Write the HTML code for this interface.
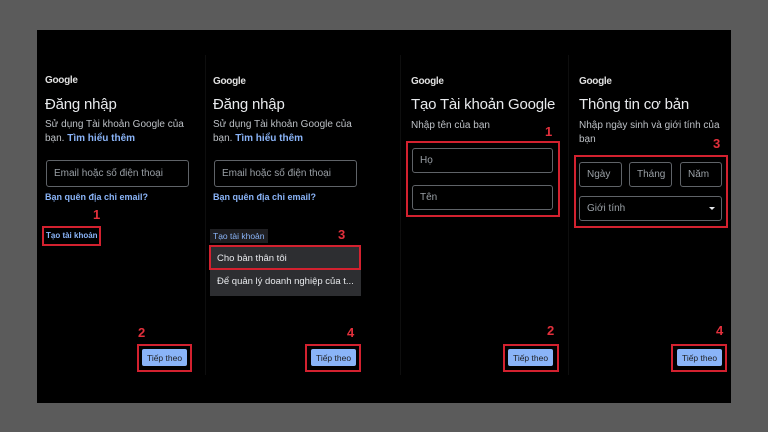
<!DOCTYPE html>
<html><head><meta charset="utf-8"><style>
*{margin:0;padding:0;box-sizing:border-box}
body{width:768px;height:432px;background:#5b5b5b;position:relative;overflow:hidden;font-family:"Liberation Sans",sans-serif;color:#e8eaed}
.blk{position:absolute;left:37px;top:30px;width:694px;height:373px;background:#000}
.a{position:absolute;white-space:nowrap}
.g{font-size:10px;font-weight:bold;color:#e0e0e0;letter-spacing:-.3px}
.t{font-size:15px;color:#e8eaed;letter-spacing:-.2px}
.s{font-size:10px;color:#bdc1c6;line-height:14px}
.lk{color:#8ab4f8;font-weight:bold}
.in{position:absolute;border:1px solid #5f6368;border-radius:3px;font-size:10px;color:#9aa0a6;padding-left:7px;display:flex;align-items:center}
.red{position:absolute;border:2px solid #d3212f}
.n{position:absolute;color:#e3303c;font-weight:bold;font-size:13px}
.btn{position:absolute;background:#8ab4f8;color:#202124;font-size:8.5px;border-radius:2px;display:flex;align-items:center;justify-content:center}
.dv{position:absolute;width:1px;background:#0e0e0e}
</style></head><body>
<div class="blk"></div>
<div class="dv" style="left:205px;top:55px;height:320px"></div>
<div class="dv" style="left:400px;top:55px;height:320px"></div>
<div class="dv" style="left:568px;top:55px;height:320px"></div>

<!-- panel 1 -->
<div class="a g" style="left:45px;top:75px">Google</div>
<div class="a t" style="left:45px;top:96px">Đăng nhập</div>
<div class="a s" style="left:45px;top:118px">Sử dụng Tài khoản Google của<br>bạn. <span class="lk">Tìm hiểu thêm</span></div>
<div class="in" style="left:46px;top:160px;width:143px;height:27px">Email hoặc số điện thoại</div>
<div class="a lk" style="left:45px;top:192px;font-size:9px">Bạn quên địa chỉ email?</div>
<div class="n" style="left:93px;top:207px">1</div>
<div class="red" style="left:42px;top:226px;width:59px;height:20px"></div>
<div class="a" style="left:46px;top:231px;font-size:8px;color:#8ab4f8;font-weight:bold">Tạo tài khoản</div>
<div class="n" style="left:138px;top:325px">2</div>
<div class="red" style="left:137px;top:344px;width:55px;height:28px"></div>
<div class="btn" style="left:142px;top:349px;width:45px;height:17px">Tiếp theo</div>

<!-- panel 2 -->
<div class="a g" style="left:213px;top:76px">Google</div>
<div class="a t" style="left:213px;top:96px">Đăng nhập</div>
<div class="a s" style="left:213px;top:118px">Sử dụng Tài khoản Google của<br>bạn. <span class="lk">Tìm hiểu thêm</span></div>
<div class="in" style="left:214px;top:160px;width:143px;height:27px">Email hoặc số điện thoại</div>
<div class="a lk" style="left:213px;top:192px;font-size:9px">Bạn quên địa chỉ email?</div>
<div class="a" style="left:210px;top:229px;width:58px;height:14px;background:#1f1f22;font-size:8.5px;color:#8ab4f8;padding:2px 3px">Tạo tài khoản</div>
<div class="a" style="left:210px;top:245px;width:151px;height:51px;background:#2d2e31"></div>
<div class="a" style="left:217px;top:253px;font-size:9.5px;color:#e8eaed">Cho bản thân tôi</div>
<div class="a" style="left:217px;top:276px;font-size:9.5px;color:#e8eaed">Để quản lý doanh nghiệp của t...</div>
<div class="red" style="left:209px;top:245px;width:152px;height:25px"></div>
<div class="n" style="left:338px;top:227px">3</div>
<div class="n" style="left:347px;top:325px">4</div>
<div class="red" style="left:305px;top:344px;width:56px;height:28px"></div>
<div class="btn" style="left:311px;top:349px;width:45px;height:17px">Tiếp theo</div>

<!-- panel 3 -->
<div class="a g" style="left:411px;top:76px">Google</div>
<div class="a t" style="left:411px;top:96px">Tạo Tài khoản Google</div>
<div class="a s" style="left:411px;top:119px">Nhập tên của bạn</div>
<div class="n" style="left:545px;top:124px">1</div>
<div class="red" style="left:406px;top:141px;width:154px;height:76px"></div>
<div class="in" style="left:412px;top:148px;width:141px;height:25px">Họ</div>
<div class="in" style="left:412px;top:185px;width:141px;height:25px">Tên</div>
<div class="n" style="left:547px;top:323px">2</div>
<div class="red" style="left:503px;top:344px;width:56px;height:28px"></div>
<div class="btn" style="left:508px;top:349px;width:45px;height:17px">Tiếp theo</div>

<!-- panel 4 -->
<div class="a g" style="left:579px;top:76px">Google</div>
<div class="a t" style="left:579px;top:96px">Thông tin cơ bản</div>
<div class="a s" style="left:579px;top:119px">Nhập ngày sinh và giới tính của<br>bạn</div>
<div class="n" style="left:713px;top:136px">3</div>
<div class="red" style="left:574px;top:155px;width:154px;height:73px"></div>
<div class="in" style="left:579px;top:162px;width:43px;height:25px">Ngày</div>
<div class="in" style="left:629px;top:162px;width:43px;height:25px">Tháng</div>
<div class="in" style="left:680px;top:162px;width:42px;height:25px">Năm</div>
<div class="in" style="left:579px;top:196px;width:143px;height:25px">Giới tính<span style="position:absolute;right:6px;top:10px;border:3px solid transparent;border-top:3px solid #e8eaed"></span></div>
<div class="n" style="left:716px;top:323px">4</div>
<div class="red" style="left:671px;top:344px;width:56px;height:28px"></div>
<div class="btn" style="left:677px;top:349px;width:45px;height:17px">Tiếp theo</div>
</body></html>
